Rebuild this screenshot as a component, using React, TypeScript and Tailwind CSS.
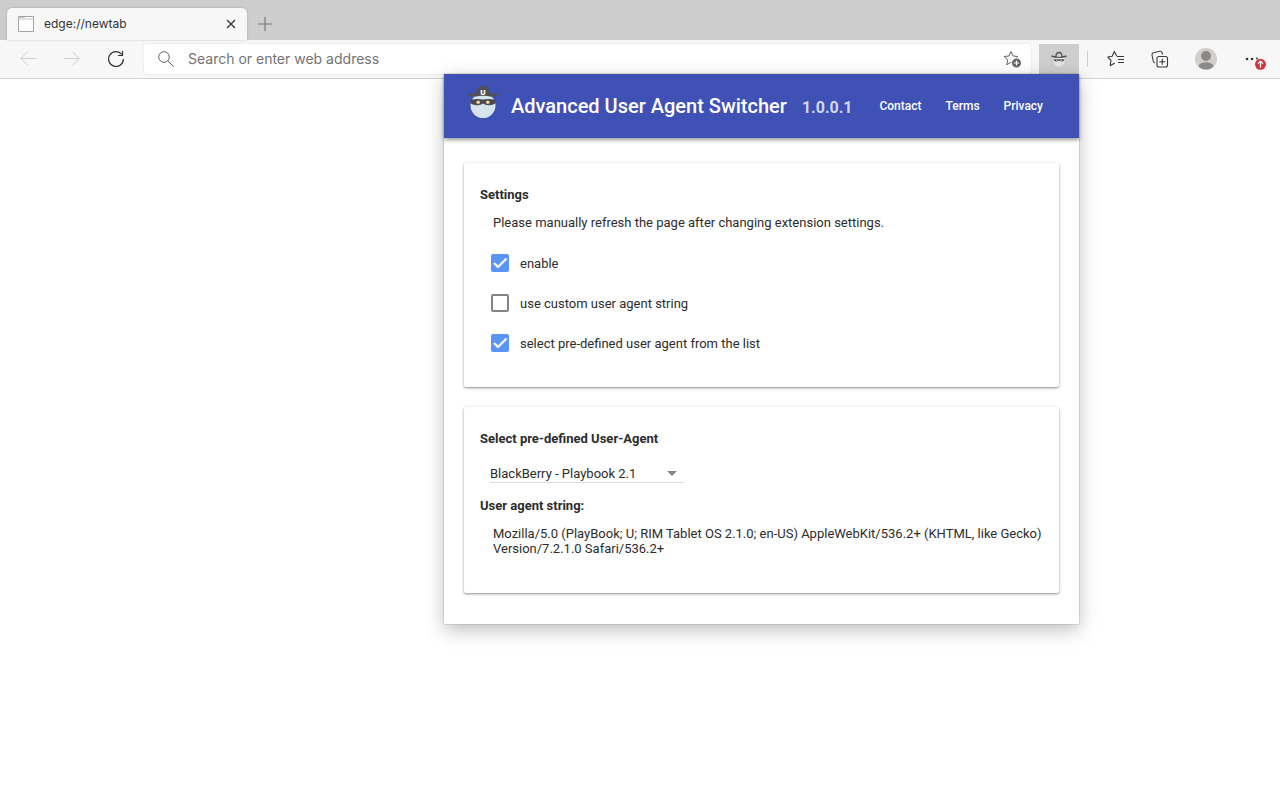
import { useState } from 'react';

function AgentLogo({ className }: { className?: string }) {
    return (
        <svg viewBox="0 0 34 34" className={className} aria-hidden="true">
            <circle cx="17" cy="20.600" r="12.500" fill="#d5e3ea" />
            <path d="M4.700 14.800 Q11 13.300 17 14.500 Q23 13.300 29.300 14.800 L29.300 18.500 Q26.500 20.500 22.500 20.300 Q19 20 17 18.500 Q15 20 11.500 20.300 Q7.500 20.500 4.700 18.500 Z" fill="#4b4b4d" />
            <circle cx="12.200" cy="17.200" r="1.800" fill="#f0c98b" />
            <circle cx="21.800" cy="17.200" r="1.800" fill="#f0c98b" />
            <circle cx="12.200" cy="17.200" r="0.600" fill="#fff" />
            <circle cx="21.800" cy="17.200" r="0.600" fill="#fff" />
            <path d="M0.500 8.300 Q5 9.500 10.300 8 Q11.500 0.500 17 0.500 Q22.500 0.500 23.700 8 Q29 9.500 33.500 8.300 Q31 11.800 25.500 11.800 Q17 9.500 8.500 11.800 Q3 11.800 0.500 8.300 Z" fill="#515155" />
            <text x="17" y="9.500" textAnchor="middle" fontSize="8" fontWeight="900" fill="#fff" fontFamily="Roboto, sans-serif">U</text>
        </svg>
    );
}

function AgentMono() {
    return (
        <svg viewBox="0 0 18 18" className="size-[18px]" aria-hidden="true">
            <circle cx="9" cy="11" r="5.5" fill="#e2e5e6" />
            <path d="M1.500 6 Q4 7.200 6 6.500 Q6 2.500 9 2.500 Q12 2.500 12 6.500 Q14 7.200 16.500 6" fill="none" stroke="#555" strokeWidth="1.400" />
            <path d="M5 7.300 H13" stroke="#555" strokeWidth="1.200" />
            <path d="M3.800 9.300 H14.200 Q14 12 11.500 11.500 L9 10.800 L6.500 11.500 Q4 12 3.800 9.300 Z" fill="#555" />
            <path d="M6 10.300 H7.500 M10.500 10.300 H12" stroke="#dfe3e4" strokeWidth="0.800" />
        </svg>
    );
}

const STAR = 'M8 1.5 L10 6 L15 6.500 L11.200 9.800 L12.300 14.700 L8 12.200 L3.700 14.700 L4.800 9.800 L1 6.500 L6 6 Z';

function TabStrip() {
    return (
        <div className="flex h-10 items-end bg-[#cdcdcd] pl-[7px]">
            <div className="flex h-8 w-60 items-center rounded-t-[5px] bg-[#f7f7f7] pr-2.5 pl-[11px] shadow-[0_0_2px_rgba(0,0,0,0.25)]">
                <svg viewBox="0 0 16 16" className="size-4" fill="#fff" stroke="#a3a1a3" aria-hidden="true">
                    <path d="M0.500 0.500 H15.500 V15.500 H0.500 Z" />
                    <path d="M0.500 3 H15.500" stroke="#c8c6c8" />
                    <path d="M0.500 1.500 H7" stroke="#c8c6c8" />
                </svg>
                <span className="ml-2.5 flex-1 text-[12px] text-[#333]">edge://newtab</span>
                <button type="button" aria-label="Close tab" className="grid size-3 place-items-center">
                    <svg viewBox="0 0 10 10" className="size-2.5" stroke="#333" strokeWidth="1.200">
                        <path d="M1 1 L9 9 M9 1 L1 9" />
                    </svg>
                </button>
            </div>
            <button type="button" aria-label="New tab" className="ml-2.5 grid h-8 w-4 place-items-center">
                <svg viewBox="0 0 14 14" className="size-3.5" stroke="#777" strokeWidth="1.200">
                    <path d="M7 0 V14 M0 7 H14" />
                </svg>
            </button>
        </div>
    );
}

function SettingCheck({ id, label, checked, onChange }: { id: string; label: string; checked: boolean; onChange: () => void }) {
    return (
        <div className="flex h-10 items-center gap-[11px] pl-[11px]">
            <span className="relative size-[18px]">
                <input
                    id={id}
                    type="checkbox"
                    checked={checked}
                    onChange={onChange}
                    className="block size-[18px] appearance-none rounded-[2px] border-2 border-[#858585] checked:border-[#5a95f5] checked:bg-[#5a95f5]"
                />
                {checked && (
                    <svg viewBox="0 0 18 18" className="pointer-events-none absolute inset-0" fill="none" stroke="#fff" strokeWidth="2.200">
                        <path d="M3 9 L7 13 L15.500 4.500" />
                    </svg>
                )}
            </span>
            <label htmlFor={id}>{label}</label>
        </div>
    );
}

const AGENTS: Record<string, string> = {
    'BlackBerry - Playbook 2.1':
        'Mozilla/5.0 (PlayBook; U; RIM Tablet OS 2.1.0; en-US) AppleWebKit/536.2+ (KHTML, like Gecko) Version/7.2.1.0 Safari/536.2+',
};

const CARD = 'rounded-[2px] bg-white px-4 py-6 shadow-[0_1px_2px_rgba(0,0,0,0.35),0_1px_4px_rgba(0,0,0,0.14)]';

function SwitcherPopup() {
    const [enabled, setEnabled] = useState(true);
    const [custom, setCustom] = useState(false);
    const [predefined, setPredefined] = useState(true);
    const [agent, setAgent] = useState('BlackBerry - Playbook 2.1');

    return (
        <section className="absolute top-full right-0 z-10 w-[635px] bg-white font-[Roboto,sans-serif] text-[13px] leading-[15px] text-[#2c2c2c] shadow-[0_0_1px_rgba(0,0,0,0.5),0_6px_18px_rgba(0,0,0,0.25)]">
            <header className="flex h-16 items-center bg-[#3f51b5] pr-9 pl-[22px] text-white shadow-[0_2px_4px_rgba(0,0,0,0.4)]">
                <AgentLogo className="mb-2 size-[34px]" />
                <h1 className="ml-[11px] text-[20px] leading-6 font-medium whitespace-nowrap">Advanced User Agent Switcher</h1>
                <span className="ml-[15px] pt-[3px] text-[16px] font-bold text-[#d3d7ef]">1.0.0.1</span>
                <nav className="ml-auto flex gap-6 text-[12px] font-medium">
                    <a href="#contact">Contact</a>
                    <a href="#terms">Terms</a>
                    <a href="#privacy">Privacy</a>
                </nav>
            </header>

            <div className="flex flex-col gap-5 px-5 pt-[25px] pb-[31px]">
                <div className={CARD}>
                    <h2 className="font-bold">Settings</h2>
                    <p className="my-[13px] ml-[13px]">Please manually refresh the page after changing extension settings.</p>
                    <SettingCheck id="enable" label="enable" checked={enabled} onChange={() => setEnabled(!enabled)} />
                    <SettingCheck id="custom" label="use custom user agent string" checked={custom} onChange={() => setCustom(!custom)} />
                    <SettingCheck
                        id="predefined"
                        label="select pre-defined user agent from the list"
                        checked={predefined}
                        onChange={() => setPredefined(!predefined)}
                    />
                </div>

                <div className={CARD}>
                    <h2 className="font-bold">
                        <label htmlFor="agent">Select pre-defined User-Agent</label>
                    </h2>
                    <div className="relative mt-[18px] mb-[15px] ml-2.5 w-[194px]">
                        <select
                            id="agent"
                            value={agent}
                            onChange={(e) => setAgent(e.target.value)}
                            className="block h-[19px] w-full appearance-none border-b border-[#dcdcdc]"
                        >
                            {Object.keys(AGENTS).map((name) => (
                                <option key={name}>{name}</option>
                            ))}
                        </select>
                        <svg viewBox="0 0 10 5" className="pointer-events-none absolute top-[7px] right-[7px] h-[5px] w-2.5" fill="#858585">
                            <path d="M0 0 H10 L5 5 Z" />
                        </svg>
                    </div>
                    <h2 className="font-bold">User agent string:</h2>
                    <p className="my-[13px] ml-[13px]">{AGENTS[agent]}</p>
                </div>
            </div>
        </section>
    );
}

function Toolbar() {
    return (
        <div className="flex h-[39px] items-center border-b border-[#d2d2d2] bg-[#f7f7f7] pr-3">
            <div className="flex w-36 shrink-0 items-center gap-7 pl-5">
                <button type="button" aria-label="Back" disabled>
                    <svg viewBox="0 0 16 16" className="size-4" fill="none" stroke="#cfcfcf">
                        <path d="M16 7.500 H0.800 M7.800 0.500 L0.800 7.500 L7.800 14.500" />
                    </svg>
                </button>
                <button type="button" aria-label="Forward" disabled>
                    <svg viewBox="0 0 16 16" className="size-4" fill="none" stroke="#cfcfcf">
                        <path d="M0 7.500 H15.200 M8.200 0.500 L15.200 7.500 L8.200 14.500" />
                    </svg>
                </button>
                <button type="button" aria-label="Reload">
                    <svg viewBox="0 0 16 16" className="size-4" fill="none" stroke="#333" strokeWidth="1.200">
                        <path d="M13.800 3.500 A7.400 7.400 0 1 0 15.400 8" />
                        <path d="M14.500 0 V4.500 H10" />
                    </svg>
                </button>
            </div>

            <div className="flex h-[30px] flex-1 items-center rounded-[3px] bg-white pr-2.5 pl-3.5 shadow-[0_0_2px_rgba(0,0,0,0.12)]">
                <svg viewBox="0 0 16 16" className="size-4" fill="none" stroke="#666" aria-hidden="true">
                    <circle cx="6" cy="6" r="5.300" />
                    <path d="M9.800 9.800 L15.700 15.700" />
                </svg>
                <input
                    type="text"
                    aria-label="Address"
                    placeholder="Search or enter web address"
                    className="ml-3.5 flex-1 pb-px text-[14px] outline-none placeholder:text-[#737373]"
                />
                <button type="button" aria-label="Add to favorites">
                    <svg viewBox="0 0 18 18" className="size-[18px]" fill="none" stroke="#666">
                        <path d={STAR} strokeLinejoin="round" />
                        <circle cx="13.500" cy="13" r="5" fill="#666" stroke="#fff" />
                        <path d="M13.500 10.500 V15.500 M11 13 H16" stroke="#fff" strokeWidth="1.200" />
                    </svg>
                </button>
            </div>

            <div className="relative ml-2">
                <button type="button" aria-label="User agent switcher" className="grid h-[30px] w-10 place-items-center bg-[#cecece]">
                    <AgentMono />
                </button>
                <SwitcherPopup />
            </div>

            <div className="ml-2 h-4 w-px bg-[#cecece]" />

            <button type="button" aria-label="Favorites" className="ml-[19px]">
                <svg viewBox="0 0 18 18" className="size-[18px]" fill="none" stroke="#3a3a3a" strokeWidth="1.100">
                    <path d="M9.800 6.300 L7.300 1.500 L5.200 6.300 L0.800 7 L4 10.300 L3.200 15.700 L7.800 13" strokeLinejoin="round" />
                    <path d="M10 6.500 H17 M11 9.500 H17 M11 12.500 H17" />
                </svg>
            </button>
            <button type="button" aria-label="Collections" className="ml-[26px]">
                <svg viewBox="0 0 18 18" className="size-[18px]" fill="none" stroke="#3a3a3a" strokeWidth="1.100">
                    <rect x="6" y="6.500" width="10.500" height="10.500" rx="2" />
                    <path d="M11.250 8.800 V14.700 M8.300 11.750 H14.200" />
                    <path d="M4 13 Q2.500 12.500 2.200 11 L1 5 Q0.800 3.300 2.500 2.800 L8.800 1.300 Q10.500 1 11 2.500 L11.500 4.500" />
                </svg>
            </button>
            <button type="button" aria-label="Profile" className="ml-[26px]">
                <svg viewBox="0 0 22 22" className="size-[22px]">
                    <circle cx="11" cy="11" r="11" fill="#d2cfcb" />
                    <circle cx="11" cy="8" r="5" fill="#8b8987" />
                    <path d="M3.500 18 Q5 14.300 11 14.300 Q17 14.300 18.500 18 Q15.500 21.500 11 21.500 Q6.500 21.500 3.500 18 Z" fill="#8b8987" />
                </svg>
            </button>
            <button type="button" aria-label="Settings and more" className="ml-7">
                <svg viewBox="0 0 23 22" className="h-[22px] w-[23px]">
                    <circle cx="2" cy="11" r="1.300" fill="#333" />
                    <circle cx="7" cy="11" r="1.300" fill="#333" />
                    <circle cx="12" cy="10.500" r="1" fill="#333" />
                    <circle cx="15.500" cy="16.300" r="5.500" fill="#d13438" />
                    <path d="M15.500 19.700 V13.300 M13 15.600 L15.500 13.100 L18 15.600" fill="none" stroke="#fff" strokeWidth="1.300" />
                </svg>
            </button>
        </div>
    );
}

export default function App() {
    return (
        <div className="min-h-screen bg-white font-[Inter,sans-serif]">
            <TabStrip />
            <Toolbar />
        </div>
    );
}
